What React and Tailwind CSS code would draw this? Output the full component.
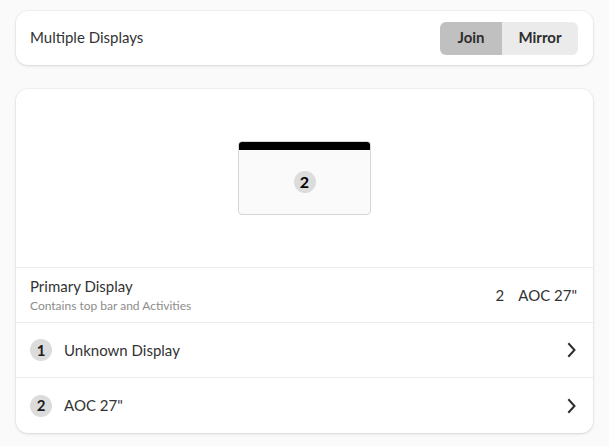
function Chevron() {
  return (
    <svg width="10" height="16" viewBox="0 0 10 16" fill="none" stroke="#2e2e2e" strokeWidth="2" strokeLinecap="square">
      <path d="M2 2 L7.5 8 L2 14" />
    </svg>
  );
}

function Badge({ n }) {
  return (
    <span className="flex h-[22px] w-[22px] items-center justify-center rounded-full bg-[#dcdcdc] text-[15px] font-bold text-[#1e1e1e]">
      {n}
    </span>
  );
}

function DisplayRow({ n, name, last }) {
  return (
    <div className={"flex h-[55px] items-center pl-[14px] pr-[16px] " + (last ? "" : "border-b border-[#ebebeb]")}>
      <Badge n={n} />
      <span className="ml-[12px] flex-1 text-[15px] text-[#333333]">{name}</span>
      <Chevron />
    </div>
  );
}

export default function App() {
  return (
    <div className="min-h-[446px] bg-[#fafafa] px-[16px] pt-[11px] font-['Lato','Noto_Sans',sans-serif]">
      <div className="flex h-[54px] items-center justify-between rounded-[12px] bg-white pl-[14px] pr-[15px] shadow-[0_0_0_1px_rgba(0,0,0,0.03),0_1px_3px_rgba(0,0,0,0.12)]">
        <span className="pb-[1px] text-[15px] text-[#333333]">Multiple Displays</span>
        <div className="flex h-[33px] overflow-hidden rounded-[6px] text-[15px] font-bold text-[#2e2e2e]">
          <button className="w-[62px] bg-[#c0c0c0] pb-[1px]">Join</button>
          <button className="w-[76px] bg-[#ebebeb] pb-[1px]">Mirror</button>
        </div>
      </div>

      <div className="mt-[24px] overflow-hidden rounded-[12px] bg-white shadow-[0_0_0_1px_rgba(0,0,0,0.03),0_1px_3px_rgba(0,0,0,0.12)]">
        <div className="flex h-[179px] items-start justify-center border-b border-[#ebebeb] pt-[52px]">
          <div className="flex h-[74px] w-[133px] flex-col overflow-hidden rounded-[4px] border border-[#d6d6d6] bg-[#fafafa]">
            <div className="h-[8px] bg-black" />
            <div className="flex flex-1 items-center justify-center pb-[1px]">
              <span className="flex h-[22px] w-[22px] items-center justify-center rounded-full bg-[#dcdcdc] text-[16px] font-bold text-black">
                2
              </span>
            </div>
          </div>
        </div>

        <div className="flex h-[55px] items-center border-b border-[#ebebeb] px-[14px]">
          <div className="flex flex-1 flex-col">
            <span className="text-[15px] leading-[22px] text-[#333333]">Primary Display</span>
            <span className="text-[12px] leading-[18px] text-[#8c8c8c]">Contains top bar and Activities</span>
          </div>
          <span className="text-[15px] text-[#333333]">2</span>
          <span className="ml-[14px] mr-[2px] text-[15px] text-[#333333]">AOC 27"</span>
        </div>

        <DisplayRow n={1} name="Unknown Display" />
        <DisplayRow n={2} name='AOC 27"' last />
      </div>
    </div>
  );
}
